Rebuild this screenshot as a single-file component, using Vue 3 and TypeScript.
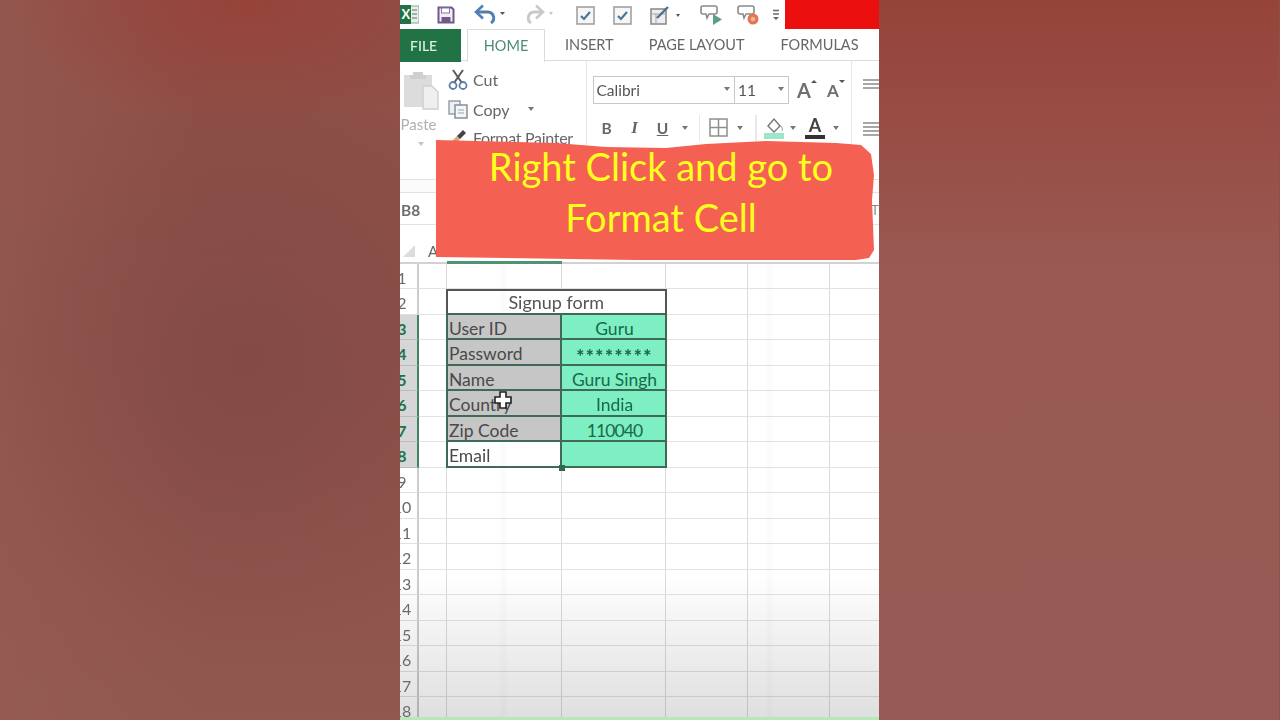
<script setup lang="ts">
interface Row {
  n: number
  b: string
  c: string
  title: boolean
  kind: string
}

const form: Record<number, [string, string]> = {
  3: ['User ID', 'Guru'],
  4: ['Password', '********'],
  5: ['Name', 'Guru Singh'],
  6: ['Country', 'India'],
  7: ['Zip Code', '110040'],
  8: ['Email', ''],
}

const rows: Row[] = Array.from({ length: 18 }, (_, i) => {
  const n = i + 1
  const f = form[n]
  return {
    n,
    b: f ? f[0] : '',
    c: f ? f[1] : '',
    title: n === 2,
    kind: f ? (n === 8 ? 'form last' : 'form') : '',
  }
})
</script>

<template>
  <div class="stage">
    <div class="side left"></div>
    <main class="center">
      <div class="excel">
        <div class="qat">
          <svg class="i-excel" width="19" height="24" viewBox="0 0 19 24">
            <rect x="9" y="3" width="10" height="17" fill="#e8efe9" stroke="#8aa596" />
            <path d="M12 7h5M12 11h5M12 15h5" stroke="#7fa08e" stroke-width="1.4" />
            <rect x="0" y="2" width="11" height="19" fill="#217346" />
            <text x="1.5" y="16" font-size="13" font-weight="700" fill="#fff" font-family="Lato, sans-serif">X</text>
          </svg>
          <svg class="m18" width="18" height="20" viewBox="0 0 18 20">
            <path d="M1.5 2.5h13l2 2v13h-15z" fill="#f2eef6" stroke="#70578f" stroke-width="2" />
            <rect x="4.5" y="3" width="8" height="5" fill="#fff" stroke="#8a74a5" />
            <rect x="4.5" y="12" width="9" height="5" fill="#6d5a86" />
          </svg>
          <svg class="m19" width="31" height="22" viewBox="0 0 31 22">
            <path d="M3 8h11a6 6 0 0 1 3 11" fill="none" stroke="#4f80b3" stroke-width="3" />
            <path d="M9 1.500 2 8l7 6.500" fill="none" stroke="#4f80b3" stroke-width="2.600" />
            <path d="M26 8h5l-2.500 3z" fill="#555" />
          </svg>
          <svg class="m20" width="28" height="22" viewBox="0 0 28 22">
            <path d="M17 8H9a6 6 0 0 0-3 11" fill="none" stroke="#c9c9c9" stroke-width="3" />
            <path d="M11 1.500 18 8l-7 6.500" fill="none" stroke="#c9c9c9" stroke-width="2.600" />
            <path d="M24 8h4l-2 3z" fill="#c5c5c5" />
          </svg>
          <svg class="m23" width="19" height="20" viewBox="0 0 19 20">
            <rect x="1" y="2" width="17" height="17" fill="#f6f6f6" stroke="#a2a2a2" stroke-width="1.600" />
            <path d="M5 11l3 3 6-7" fill="none" stroke="#4a7596" stroke-width="2.200" />
          </svg>
          <svg class="m18" width="19" height="20" viewBox="0 0 19 20">
            <rect x="1" y="2" width="17" height="17" fill="#f6f6f6" stroke="#a2a2a2" stroke-width="1.600" />
            <path d="M5 11l3 3 6-7" fill="none" stroke="#4a7596" stroke-width="2.200" />
          </svg>
          <svg class="m18" width="30" height="20" viewBox="0 0 30 20">
            <rect x="1" y="4" width="15" height="15" fill="#eee" stroke="#8d8d8d" stroke-width="1.600" />
            <path d="M1 9h15M6 9v10" stroke="#a5a5a5" />
            <path d="M7 13 18 2" stroke="#52708c" stroke-width="2.400" />
            <path d="M26 9h4l-2 3z" fill="#555" />
          </svg>
          <svg class="m20" width="23" height="22" viewBox="0 0 23 22">
            <path d="M3 2h12a2 2 0 0 1 2 2v4a2 2 0 0 1-2 2H9l-2 4-1-4H3a2 2 0 0 1-2-2V4a2 2 0 0 1 2-2z" fill="#fff" stroke="#8a8a8a" stroke-width="1.600" />
            <path d="M13 10l9 5.500-9 5.500z" fill="#5d9f86" />
          </svg>
          <svg class="m14" width="23" height="22" viewBox="0 0 23 22">
            <path d="M3 2h12a2 2 0 0 1 2 2v4a2 2 0 0 1-2 2H9l-2 4-1-4H3a2 2 0 0 1-2-2V4a2 2 0 0 1 2-2z" fill="#fff" stroke="#8a8a8a" stroke-width="1.600" />
            <circle cx="16" cy="15" r="5.500" fill="#e3764f" />
            <circle cx="16" cy="15" r="2.300" fill="#e9b9a0" />
          </svg>
          <svg class="m12" width="8" height="12" viewBox="0 0 8 12">
            <path d="M1 1.500h6M1 5h6" stroke="#666" stroke-width="1.400" />
            <path d="M1 8h6l-3 3z" fill="#666" />
          </svg>
          <div class="red-block"></div>
        </div>

        <div class="tabs">
          <span class="file">FILE</span>
          <span class="tab home">HOME</span>
          <span class="tab insert">INSERT</span>
          <span class="tab layout">PAGE LAYOUT</span>
          <span class="tab formulas">FORMULAS</span>
        </div>

        <div class="ribbon">
          <section class="clip-group">
            <div class="paste">
              <svg width="36" height="41" viewBox="0 0 36 41">
                <rect x="1" y="6" width="28" height="32" fill="#dcdcdc" />
                <path d="M10 6V3h10v3h3v4H7V6z" fill="#cfcfcf" />
                <path d="M20 17h9l6 6v17H20z" fill="#efeff1" stroke="#cfcfd2" stroke-width="1.400" />
              </svg>
              <span class="paste-label">Paste</span>
              <i class="caret light"></i>
            </div>
            <div class="clip-list">
              <div class="clip-item">
                <svg width="20" height="21" viewBox="0 0 20 21">
                  <path d="M5 1l9 13M15 1 6 14" stroke="#5b5b5b" stroke-width="2" />
                  <circle cx="5" cy="16.500" r="3.500" fill="none" stroke="#5d7fa5" stroke-width="1.800" />
                  <circle cx="15" cy="16.500" r="3.500" fill="none" stroke="#5d7fa5" stroke-width="1.800" />
                </svg>
                <span>Cut</span>
              </div>
              <div class="clip-item">
                <svg width="20" height="19" viewBox="0 0 20 19">
                  <rect x="1" y="1" width="11" height="13" fill="#eef1f3" stroke="#8f9aa3" stroke-width="1.400" />
                  <rect x="7" y="5" width="12" height="13" fill="#f4f6f7" stroke="#7f8a93" stroke-width="1.400" />
                  <path d="M10 10h6M10 13h6" stroke="#9aa5ad" />
                </svg>
                <span>Copy</span>
                <i class="caret copy-caret"></i>
              </div>
              <div class="clip-item painter">
                <svg width="20" height="19" viewBox="0 0 20 19">
                  <path d="M2 15l7-7 3 3-5 6z" fill="#d9a77a" />
                  <path d="M9 8l6-6 3 3-6 6z" fill="#444" />
                </svg>
                <span>Format Painter</span>
              </div>
            </div>
          </section>

          <section class="font-group">
            <div class="font-row">
              <div class="combo name">Calibri<i class="caret"></i></div>
              <div class="combo size">11<i class="caret"></i></div>
              <span class="grow big">A<i class="tip up"></i></span>
              <span class="grow small">A<i class="tip"></i></span>
            </div>
            <div class="style-row">
              <b class="st bold">B</b>
              <em class="st ital">I</em>
              <u class="st under">U</u>
              <i class="caret c1"></i>
              <span class="vsep sep1"></span>
              <svg class="borders" width="19" height="19" viewBox="0 0 19 19">
                <rect x="1" y="1" width="17" height="17" fill="none" stroke="#8f8f8f" stroke-width="1.500" />
                <path d="M9.500 1v17M1 9.500h17" stroke="#8f8f8f" stroke-width="1.500" />
              </svg>
              <i class="caret c2"></i>
              <span class="vsep sep2"></span>
              <svg class="fill" width="20" height="22" viewBox="0 0 20 22">
                <path d="M4 9l6-7 6 7-6 6z" fill="#fff" stroke="#777" stroke-width="1.400" />
                <path d="M16 8c2 2 3 4 2 6" stroke="#999" fill="none" />
                <rect x="0" y="16" width="20" height="6" fill="#9de6c8" />
              </svg>
              <i class="caret c3"></i>
              <span class="color">A</span>
              <i class="caret c4"></i>
            </div>
          </section>

          <section class="align-group">
            <svg width="27" height="14" viewBox="0 0 27 14">
              <path d="M0 2h27M0 6h27M0 10h27" stroke="#8b8b8b" stroke-width="1.500" />
            </svg>
            <svg width="27" height="16" viewBox="0 0 27 16">
              <path d="M0 2h27M0 6h18M0 10h27M0 14h18" stroke="#8b8b8b" stroke-width="1.500" />
            </svg>
          </section>
        </div>

        <div class="band"></div>
        <div class="formula"><span class="ref">B8</span><span class="fx">T</span></div>
        <div class="col-head">
          <svg width="12" height="12" viewBox="0 0 12 12"><path d="M12 0v12H0z" fill="#dcdcdc" /></svg>
          <span class="col-a">A</span>
          <span class="col-b"></span>
        </div>

        <div class="sheet">
          <div v-for="r in rows" :key="r.n" class="row">
            <div class="head" :class="{ sel: r.kind }">{{ r.n }}</div>
            <div class="cell"></div>
            <div v-if="r.title" class="cell title">Signup form</div>
            <template v-else>
              <div class="cell b" :class="[r.kind, { filled: r.kind === 'form' }]">{{ r.b }}</div>
              <div class="cell c" :class="[r.kind, { stars: r.c.startsWith('*'), num: /^\d+$/.test(r.c) }]">{{ r.c }}</div>
            </template>
            <div class="cell"></div>
            <div class="cell"></div>
            <div class="cell"></div>
          </div>
        </div>
      </div>

      <div class="banner">
        <p>Right Click and go to</p>
        <p>Format Cell</p>
      </div>
      <i class="handle"></i>
      <svg class="cursor" width="20" height="22" viewBox="0 0 20 22">
        <path d="M7 2h6v5h5v6h-5v5H7v-5H2V7h5z" fill="#fff" stroke="#222" stroke-width="1.600" />
      </svg>
      <div class="strip"></div>
    </main>
    <div class="side right"></div>
  </div>
</template>

<style>
html, body { margin: 0; background: #8e5048; }
</style>

<style scoped>
.stage { display: flex; width: 1280px; height: 720px; overflow: hidden; font-family: Lato, "Liberation Sans", sans-serif; }
.side { width: 400px; flex: none; }
.left {
  background:
    radial-gradient(ellipse 260px 300px at 62% 50%, #844b45 0%, rgba(132,75,69,0) 100%),
    radial-gradient(ellipse 240px 130px at 62% 0%, #97433a 0%, rgba(151,67,58,0) 100%),
    linear-gradient(90deg, rgba(152,94,86,0.5) 0%, rgba(152,94,86,0) 50%),
    linear-gradient(180deg, #8f4f47 0%, #8b5048 50%, #915850 100%);
}
.right {
  background: linear-gradient(180deg, #96443a 0%, #984d44 18%, #995a54 38%, #985a54 100%);
}
.center { position: relative; width: 479px; height: 720px; flex: none; overflow: hidden; background: #fff; }
.excel { height: 720px; overflow: hidden; filter: blur(0.65px); color: #5c5c5c; }

.qat { display: flex; align-items: center; height: 29px; }
.m12 { margin-left: 12px; } .m14 { margin-left: 14px; } .m18 { margin-left: 18px; }
.m19 { margin-left: 19px; } .m20 { margin-left: 20px; } .m23 { margin-left: 23px; }
.qat svg { flex: none; }
.red-block { width: 94px; height: 29px; margin-left: auto; background: #ec0f0f; }

.tabs { position: relative; display: flex; align-items: stretch; height: 32px; box-sizing: border-box; border-bottom: 1.5px solid #dcdcdc; font-size: 14.500px; }
.file { display: flex; align-items: center; width: 61px; box-sizing: border-box; padding-left: 10px; background: #217346; color: #d9f2e3; font-weight: 500; font-size: 14px; margin-bottom: -1.5px; }
.tab { display: flex; align-items: center; color: #666; white-space: nowrap; }
.home { width: 78px; margin-left: 6px; justify-content: center; box-sizing: border-box; border: 1.5px solid #dcdcdc; border-bottom: 0; background: #fff; color: #4b8d72; margin-bottom: -1.5px; }
.insert { margin-left: 20px; }
.layout { margin-left: 35px; }
.formulas { margin-left: 36px; }

.ribbon { display: flex; height: 119px; box-sizing: border-box; border-bottom: 1.5px solid #e2e2e2; }
.clip-group { display: flex; width: 187px; box-sizing: border-box; border-right: 1.5px solid #e8e8e8; flex: none; }
.paste { display: flex; flex-direction: column; align-items: center; width: 38px; margin-left: 2px; padding-top: 8px; }
.paste-label { font-size: 15px; line-height: 18px; color: #b0b0b0; margin: 5px 0 0 -5px; }
.paste .caret { margin-top: 9px; }
.clip-list { display: flex; flex-direction: column; margin-left: 8px; padding-top: 3px; }
.clip-item { display: flex; align-items: center; gap: 5px; height: 30px; font-size: 16px; color: #666; white-space: nowrap; }
.clip-item svg { flex: none; }
.painter { margin-top: -2px; letter-spacing: -0.300px; }
.copy-caret { margin-left: 13px; }

.font-group { width: 265px; flex: none; box-sizing: border-box; border-right: 1.5px solid #e8e8e8; padding: 15px 0 0 5.5px; }
.font-row { display: flex; align-items: center; height: 28px; }
.combo { position: relative; display: flex; align-items: center; height: 28px; box-sizing: border-box; border: 1.5px solid #c8c8c8; padding-left: 3px; font-size: 15.500px; color: #555; }
.combo .caret { position: absolute; right: 4px; top: 10px; }
.name { width: 142px; }
.size { width: 55px; margin-left: -0.5px; }
.grow { position: relative; color: #6f6f6f; font-weight: 700; }
.big { font-size: 20px; margin-left: 8px; }
.small { font-size: 17px; margin-left: 16px; }
.tip { position: absolute; right: -6px; top: 0; border: 3px solid transparent; border-top-color: #555; }
.tip.up { border-top-color: transparent; border-bottom-color: #555; top: -1px; }

.style-row { display: flex; align-items: center; height: 27px; margin-top: 10px; }
.st { display: block; width: 28px; text-align: center; font-size: 15.500px; line-height: 20px; color: #666; flex: none; font-weight: 700; }
.ital { font-family: "Liberation Serif", serif; font-size: 17px; }
.c1 { margin-left: 5px; }
.vsep { width: 1.5px; height: 26px; background: #e8e8e8; flex: none; }
.sep1 { margin-left: 11px; }
.sep2 { margin-left: 12px; }
.borders { margin-left: 9px; flex: none; }
.c2 { margin-left: 9px; }
.fill { margin-left: 7px; flex: none; }
.c3 { margin-left: 6px; }
.color { width: 20px; margin-left: 9.500px; text-align: center; font-size: 18px; line-height: 19px; font-weight: 700; color: #444; border-bottom: 4px solid #333; flex: none; }
.c4 { margin-left: 8px; }

.caret { display: block; width: 0; height: 0; flex: none; border: 3.500px solid transparent; border-top: 4px solid #777; border-bottom: 0; }
.caret.light { border-top-color: #c4c4c4; }

.align-group { display: flex; flex-direction: column; gap: 29px; padding: 17px 0 0 11px; }
.align-group svg { flex: none; }

.band { height: 13px; box-sizing: border-box; border-bottom: 1.5px solid #e2e2e2; background: #fbfbfb; }
.formula { display: flex; align-items: center; justify-content: space-between; height: 32px; box-sizing: border-box; border-bottom: 1.5px solid #e2e2e2; padding: 2px 0 0 1px; font-size: 15.500px; color: #666; }
.ref { font-weight: 700; color: #6e6e6e; }
.fx { color: #888; font-size: 13px; }
.col-head { display: flex; align-items: center; height: 38.500px; box-sizing: border-box; border-bottom: 2px solid #d2d2d2; padding: 16px 0 0 3px; position: relative; font-size: 15px; color: #666; }
.col-a { margin-left: 13px; }
.col-b { position: absolute; left: 47px; bottom: -2px; width: 115px; height: 3px; background: #4f9274; }

.sheet {
  margin-left: -13px;
  background:
    linear-gradient(90deg, transparent 112px, rgba(0,0,0,0.02) 116px, transparent 122px, transparent 378px, rgba(0,0,0,0.02) 382px, transparent 388px),
    linear-gradient(180deg, #fff 0%, #fff 68%, #f4f4f4 78%, #dedede 100%);
}
.row { display: grid; grid-template-columns: 32px 28px 115px 104px 82px 82px 50px; height: 25.500px; }
.head { display: flex; align-items: center; justify-content: center; box-sizing: border-box; padding-top: 3px; border-bottom: 1.5px solid rgba(0,0,0,0.12); border-right: 2px solid rgba(0,0,0,0.2); font-size: 16px; color: #6a6a6a; }
.head.sel { background: #d6d6d6; color: #217346; font-weight: 700; border-right-color: #3f8464; }
.cell { box-sizing: border-box; border-right: 1.5px solid rgba(0,0,0,0.14); border-bottom: 1.5px solid rgba(0,0,0,0.11); display: flex; align-items: center; font-size: 17.500px; color: #4a4a4a; white-space: nowrap; overflow: hidden; }
.title { grid-column: span 2; justify-content: center; border: 2px solid #555; border-bottom: 2px solid #3f6a55; margin: 0 -1px -0.5px -1.5px; color: #555; font-size: 18px; }
.cell.b.form, .cell.c.form { border-bottom: 2px solid #3f6a58; padding-top: 4px; }
.cell.b.form { margin-left: -1.500px; border-left: 2px solid #3f6a58; padding-left: 1.500px; border-right: 2px solid #3f6a58; }
.cell.b.filled { background: #c6c6c6; }
.cell.c.form { background: #7defc2; border-right: 2px solid #3f6a58; justify-content: center; color: #19694a; margin-right: -1px; padding-left: 2px; }
.cell.num { letter-spacing: -0.900px; }
.cell.stars { font-weight: 900; letter-spacing: 1.500px; align-items: flex-start; font-size: 19px; padding-top: 2px; }

.banner {
  position: absolute;
  left: 36px;
  top: 140px;
  width: 438px;
  height: 120px;
  box-sizing: border-box;
  padding: 1px 0 0 12px;
  background: #f46051;
  clip-path: polygon(0 0, 40px 1px, 120px 3px, 170px 7px, 230px 8px, 270px 4px, 330px 1px, 400px 3px, 425px 5px, 435px 14px, 438px 35px, 436px 60px, 438px 110px, 433px 118px, 420px 120px, 200px 120px, 70px 118px, 0 117px);
  text-align: center;
  color: #ffff1f;
  font-size: 38px;
  line-height: 51px;
}
.banner p { margin: 0; white-space: nowrap; }
.handle { position: absolute; left: 159px; top: 465px; width: 6px; height: 6px; background: #2f6a50; }
.cursor { position: absolute; left: 93px; top: 390px; }
.strip { position: absolute; left: 0; right: 0; bottom: 0; height: 3px; background: #b6e9b8; }
</style>
